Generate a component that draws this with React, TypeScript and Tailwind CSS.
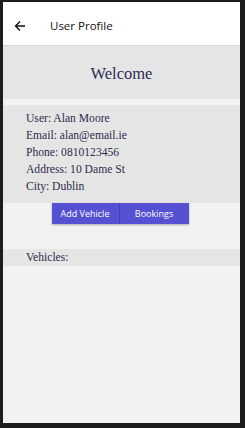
import React from 'react';

const BackArrow: React.FC = () => (
  <svg width="12" height="12" viewBox="0 0 12 12" fill="none" stroke="#111" strokeWidth={1.4}>
    <path d="M11 6H1.5M6 1.5L1.5 6L6 10.5" />
  </svg>
);

const info = [
  'User: Alan Moore',
  'Email: alan@email.ie',
  'Phone: 0810123456',
  'Address: 10 Dame St',
  'City: Dublin',
];

export default function App() {
  return (
    <div className="w-[245px] h-[428px] bg-[#1c1c1c] pt-[2px] pl-[3px] pr-[5px] pb-[5px]">
      <div className="h-full flex flex-col bg-[#f2f2f2]">
        <div className="h-[44px] shrink-0 bg-white flex items-center pt-[4px] border-b border-[#d4d4d4] font-['Open_Sans',sans-serif]">
          <div className="w-[47px] pl-[11px] flex items-center">
            <BackArrow />
          </div>
          <span className="text-[11.5px] text-[#111]">User Profile</span>
        </div>
        <div className="h-[53px] shrink-0 bg-[#e5e5e5] flex items-center justify-center pt-[4px] font-['Liberation_Serif',serif] text-[16.5px] text-[#2c2c54]">
          Welcome
        </div>
        <div className="h-[6px] shrink-0" />
        <div className="bg-[#e5e5e5] pl-[23px] pt-[5px] pb-[8px] font-['Liberation_Serif',serif] text-[11.6px] leading-[17px] text-[#2c2c4c]">
          {info.map(line => (
            <div key={line}>{line}</div>
          ))}
        </div>
        <div className="flex justify-center pr-[3px] font-['Open_Sans',sans-serif]">
          <div className="flex shadow-[0_1px_2px_rgba(0,0,0,0.3)]">
            <button className="w-[68px] h-[21px] bg-[#5650d2] text-white text-[9px] border-r border-[#4640b8]">Add Vehicle</button>
            <button className="w-[69px] h-[21px] bg-[#5650d2] text-white text-[9px]">Bookings</button>
          </div>
        </div>
        <div className="h-[25px] shrink-0" />
        <div className="h-[17px] shrink-0 bg-[#e5e5e5] pl-[23px] font-['Liberation_Serif',serif] text-[11.6px] leading-[17px] text-[#2c2c4c]">
          Vehicles:
        </div>
      </div>
    </div>
  );
}
